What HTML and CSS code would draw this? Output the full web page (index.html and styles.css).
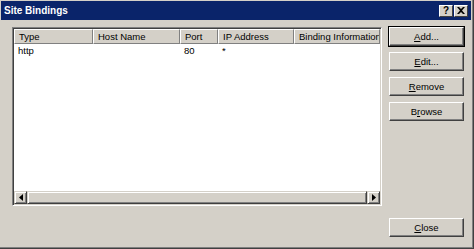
FILE: index.html
```html
<!DOCTYPE html>
<html>
<head>
<meta charset="utf-8">
<link rel="stylesheet" href="styles.css">
</head>
<body>
<div class="window">
  <div class="titlebar">
    <span class="title">Site Bindings</span>
    <div class="tbtns">
      <span class="tbtn help">?</span>
      <span class="tbtn close-x">
        <svg width="8" height="7" viewBox="0 0 8 7"><path d="M0 0h2l2 2 2-2h2L5 3.5 8 7H6L4 5 2 7H0l3-3.5z" fill="#000"/></svg>
      </span>
    </div>
  </div>
  <div class="body">
    <div class="list">
      <div class="header">
        <div class="col c1">Type</div>
        <div class="col c2">Host Name</div>
        <div class="col c3">Port</div>
        <div class="col c4">IP Address</div>
        <div class="col c5">Binding Information</div>
      </div>
      <div class="rows">
        <div class="row">
          <div class="cell c1">http</div>
          <div class="cell c2"></div>
          <div class="cell c3">80</div>
          <div class="cell c4">*</div>
          <div class="cell c5"></div>
        </div>
      </div>
      <div class="hscroll">
        <div class="sbtn"><svg width="4" height="7" viewBox="0 0 4 7"><path d="M4 0v7L0 3.5z" fill="#000"/></svg></div>
        <div class="track"></div>
        <div class="sbtn"><svg width="4" height="7" viewBox="0 0 4 7"><path d="M0 0v7l4-3.5z" fill="#000"/></svg></div>
      </div>
    </div>
    <div class="side">
      <div class="btns">
        <div class="btn default"><span><u>A</u>dd...</span></div>
        <div class="btn"><span><u>E</u>dit...</span></div>
        <div class="btn"><span><u>R</u>emove</span></div>
        <div class="btn"><span>B<u>r</u>owse</span></div>
      </div>
      <div class="btn"><span><u>C</u>lose</span></div>
    </div>
  </div>
</div>
</body>
</html>
```
FILE: styles.css
```css
html, body {
  margin: 0;
  padding: 0;
  background: #d4d0c8;
}
body {
  width: 474px;
  height: 249px;
  overflow: hidden;
  font-family: "Liberation Sans", Arial, sans-serif;
  font-size: 9.5px;
  color: #000;
}
.window {
  width: 474px;
  height: 249px;
  box-sizing: border-box;
  background: #d4d0c8;
  border-right: 1px solid #404040;
  border-bottom: 1px solid #404040;
  box-shadow: inset -1px -1px 0 #808080;
  display: flex;
  flex-direction: column;
}
.titlebar {
  height: 19px;
  margin: 1px 2px 0 1px;
  background: #0a246a;
  display: flex;
  align-items: center;
  justify-content: space-between;
  padding: 0 3px 0 3px;
}
.title {
  color: #fff;
  font-weight: bold;
  font-size: 10px;
}
.tbtns {
  display: flex;
  gap: 1px;
}
.tbtn {
  width: 14px;
  height: 12px;
  box-sizing: border-box;
  background: #d4d0c8;
  border-top: 1px solid #fff;
  border-left: 1px solid #fff;
  border-right: 1px solid #404040;
  border-bottom: 1px solid #404040;
  display: flex;
  align-items: center;
  justify-content: center;
  font-weight: bold;
  font-size: 10px;
  line-height: 1;
}
.body {
  flex: 1;
  display: flex;
  padding: 7px 9px 11px 12px;
  gap: 7px;
}
.list {
  width: 371px;
  height: 179px;
  box-sizing: border-box;
  background: #fff;
  border-top: 1px solid #808080;
  border-left: 1px solid #808080;
  border-right: 1px solid #fff;
  border-bottom: 1px solid #fff;
  box-shadow: inset 1px 1px 0 #404040, inset -1px -1px 0 #d4d0c8;
  padding: 1px 1px 1px 1px;
  display: flex;
  flex-direction: column;
}
.header {
  display: flex;
  height: 15px;
}
.col {
  box-sizing: border-box;
  background: #d4d0c8;
  border-top: 1px solid #fff;
  border-left: 1px solid #fff;
  border-right: 1px solid #808080;
  border-bottom: 1px solid #808080;
  padding-left: 4px;
  line-height: 13px;
  white-space: nowrap;
  overflow: hidden;
}
.c1 { width: 79px; }
.c2 { width: 87px; }
.c3 { width: 38px; }
.c4 { width: 76px; }
.c5 { width: 86px; }
.rows {
  flex: 1;
}
.row {
  display: flex;
  height: 14px;
  margin-top: 0px;
}
.cell {
  padding-left: 4px;
  line-height: 14px;
  box-sizing: border-box;
}
.hscroll {
  height: 13px;
  display: flex;
  background: #e6e4df;
}
.sbtn {
  width: 13px;
  height: 13px;
  box-sizing: border-box;
  background: #d4d0c8;
  border-top: 1px solid #d4d0c8;
  border-left: 1px solid #d4d0c8;
  border-right: 1px solid #404040;
  border-bottom: 1px solid #404040;
  box-shadow: inset 1px 1px 0 #fff, inset -1px -1px 0 #808080;
  display: flex;
  align-items: center;
  justify-content: center;
}
.track {
  flex: 1;
  box-sizing: border-box;
  background: #d4d0c8;
  border-top: 1px solid #d4d0c8;
  border-left: 1px solid #d4d0c8;
  border-right: 1px solid #404040;
  border-bottom: 1px solid #404040;
  box-shadow: inset 1px 1px 0 #fff, inset -1px -1px 0 #808080;
}
.side {
  width: 75px;
  display: flex;
  flex-direction: column;
  justify-content: space-between;
}
.btns {
  display: flex;
  flex-direction: column;
  gap: 6px;
}
.btn {
  width: 75px;
  height: 19px;
  box-sizing: border-box;
  background: #d4d0c8;
  border-top: 1px solid #fff;
  border-left: 1px solid #fff;
  border-right: 1px solid #404040;
  border-bottom: 1px solid #404040;
  box-shadow: inset -1px -1px 0 #808080;
  display: flex;
  align-items: center;
  justify-content: center;
}
.btn.default {
  outline: 1px solid #000;
  border-color: #fff #404040 #404040 #fff;
}
u { text-decoration: underline; }
```
